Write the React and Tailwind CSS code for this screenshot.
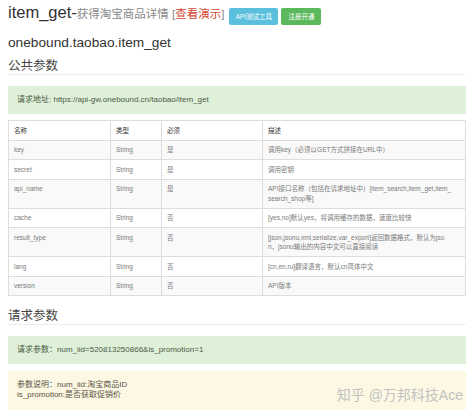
const FONT = { fontFamily: '"Liberation Sans", "Noto Sans CJK SC", sans-serif' };

const ROWS = [
  ['key', 'String', '是', ['调用key（必须以GET方式拼接在URL中）']],
  ['secret', 'String', '是', ['调用密钥']],
  ['api_name', 'String', '是', ['API接口名称（包括在请求地址中）[item_search,item_get,item_', 'search_shop等]']],
  ['cache', 'String', '否', ['[yes,no]默认yes，将调用缓存的数据，速度比较快']],
  ['result_type', 'String', '否', ['[json,jsonu,xml,serialize,var_export]返回数据格式，默认为jso', 'n，jsonu输出的内容中文可以直接阅读']],
  ['lang', 'String', '否', ['[cn,en,ru]翻译语言，默认cn简体中文']],
  ['version', 'String', '否', ['API版本']],
];

const cell = 'border border-[#ddd] px-[5px] py-[4.5px] leading-[9.5px] align-top whitespace-nowrap overflow-hidden';

function ParamTable() {
  return (
    <table className="mt-[6px] w-full table-fixed border-collapse text-[6.5px]">
      <colgroup>
        <col className="w-[102px]" />
        <col className="w-[51px]" />
        <col className="w-[101px]" />
        <col />
      </colgroup>
      <thead>
        <tr className="text-[#333]">
          <th className={`${cell} text-left font-normal`}>名称</th>
          <th className={`${cell} text-left font-normal`}>类型</th>
          <th className={`${cell} text-left font-normal`}>必须</th>
          <th className={`${cell} text-left font-normal`}>描述</th>
        </tr>
      </thead>
      <tbody className="text-[#7a7a7a]">
        {ROWS.map((r, i) => (
          <tr key={r[0]} className={i % 2 === 0 ? 'bg-[#f9f9f9]' : 'bg-white'}>
            <td className={cell}>{r[0]}</td>
            <td className={cell}>{r[1]}</td>
            <td className={cell}>{r[2]}</td>
            <td className={cell}>
              {r[3].map((line, j) => (
                <div key={j}>{line}</div>
              ))}
            </td>
          </tr>
        ))}
      </tbody>
    </table>
  );
}

export default function App() {
  return (
    <div className="w-[474px] h-[414px] overflow-hidden bg-white px-[8px]" style={FONT}>
      {/* 标题 */}
      <div className="flex items-start">
        <div className="mt-[3px] leading-[19px] whitespace-nowrap">
          <span className="text-[16.5px] text-[#333]">item_get-</span>
          <span className="text-[11.5px] text-[#888]">获得淘宝商品详情 [</span>
          <span className="text-[11.5px] text-[#d2452f]">查看演示</span>
          <span className="text-[11.5px] text-[#888]">]</span>
        </div>
        <div className="mt-[8px] ml-[5px] flex gap-[3px]">
          <span className="flex h-[17px] w-[49px] items-center justify-center rounded-[2px] bg-[#5bc0de] text-[6.5px] text-white">API测试工具</span>
          <span className="flex h-[17px] w-[40px] items-center justify-center rounded-[2px] bg-[#5cb85c] text-[6.5px] text-white">注册开通</span>
        </div>
      </div>

      <div className="mt-[9px] text-[13.7px] leading-[18px] text-[#333]">onebound.taobao.item_get</div>
      <div className="mt-[6px] border-b border-[#eee] text-[12.5px] leading-[16px] text-[#444]">公共参数</div>

      <div className="mt-[11px] flex h-[28px] items-center bg-[#dff0d8] px-[9px] text-[8px] text-[#4b5a47]">
        请求地址: https://api-gw.onebound.cn/taobao/item_get
      </div>

      <ParamTable />

      <div className="mt-[12px] border-b border-[#eee] text-[12.5px] leading-[16px] text-[#444]">请求参数</div>

      <div className="mt-[11px] flex h-[28px] items-center bg-[#dff0d8] px-[9px] text-[8px] text-[#4b5a47]">
        请求参数：num_iid=520813250866&amp;is_promotion=1
      </div>

      <div className="relative mt-[7px] h-[39px] bg-[#fcf8e3] px-[9px] pt-[9px] text-[8px] leading-[10px] text-[#5a5245]">
        <div>参数说明：num_iid:淘宝商品ID</div>
        <div>is_promotion:是否获取促销价</div>
        <div className="absolute right-[3px] top-[16px] text-[14px] leading-[16px] text-[#c2c2c2] whitespace-nowrap">
          知乎 @万邦科技Ace
        </div>
      </div>
    </div>
  );
}
